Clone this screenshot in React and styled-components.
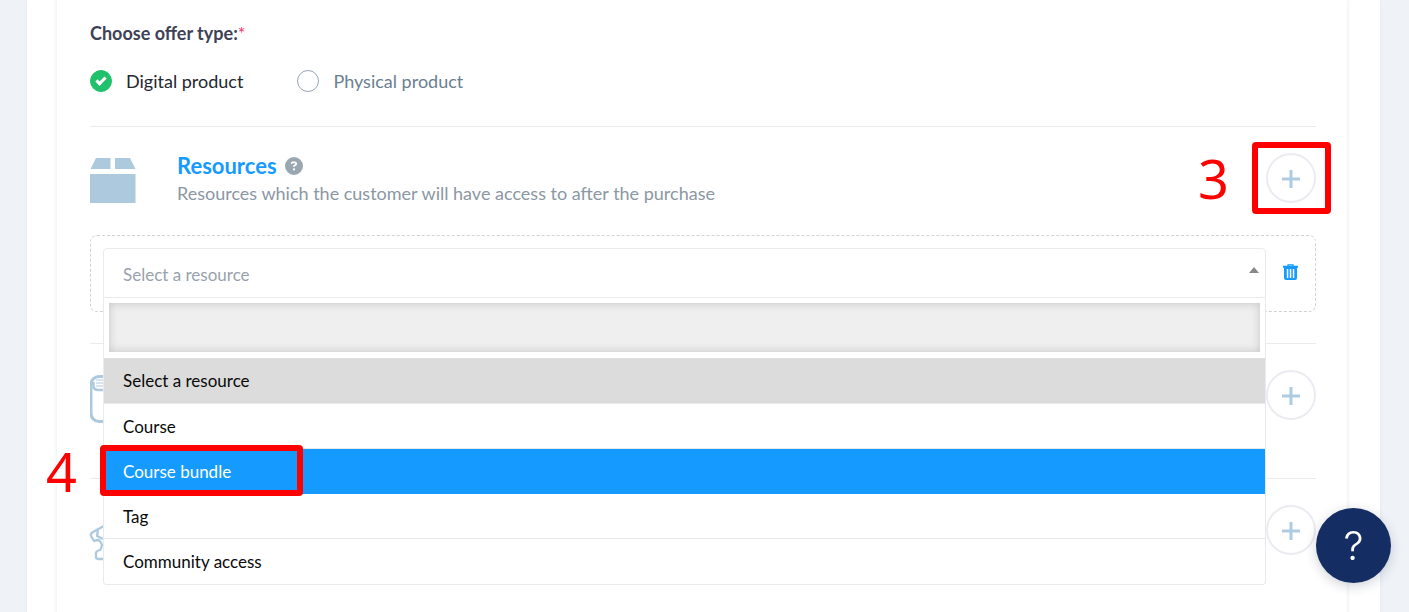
import React from "react";
import styled, { createGlobalStyle } from "styled-components";
import { FaCircleQuestion } from "react-icons/fa6";

const Global = createGlobalStyle`
  *, *::before, *::after { box-sizing: border-box; }
  body { margin: 0; background: #eff3f8; color: #0a0a0a; font-family: Lato, "Liberation Sans", sans-serif; }
  button, input, select { font: inherit; }
`;

const Page = styled.div`
  height: 100vh;
  overflow: hidden;
  padding: 0 29px 0 27px;
`;

const Shell = styled.div`
  min-height: 100%;
  padding: 0 33px 0 30px;
  background: #fff;
  box-shadow: 0 0 3px #dfe7f0;
`;

const Panel = styled.main`
  min-height: 100vh;
  padding: 22px 31px 58px 33px;
  background: #fff;
  box-shadow: 0 0 4px 1px #eceff4;
`;

const OfferType = styled.fieldset`
  margin: 0;
  padding: 0 0 33px;
  border: 0;
`;

const Legend = styled.legend`
  padding: 0;
  font-size: 18px;
  line-height: 22px;
  font-weight: 700;
  color: #3d4257;
`;

const Required = styled.span`
  color: #ff3366;
  font-weight: 400;
`;

const Choices = styled.div`
  display: flex;
  gap: 54px;
  padding-top: 25px;
`;

const Choice = styled.label`
  display: flex;
  align-items: center;
  gap: 14px;
  font-size: 18px;
  line-height: 24px;
  color: ${(p) => (p.$active ? "#23272f" : "#6c7f92")};
`;

const Radio = styled.input`
  appearance: none;
  width: 22px;
  height: 22px;
  margin: 0;
  border: 1px solid #98a3b1;
  border-radius: 50%;
  background: #fff;
  display: grid;
  place-items: center;

  &:checked { border-color: #1fc16b; background: #1fc16b; }
  &:checked::before {
    content: "";
    width: 10px;
    height: 6px;
    margin-bottom: 2px;
    border: solid #fff;
    border-width: 0 0 3px 3px;
    transform: rotate(-45deg);
  }
`;

const Section = styled.section`
  border-top: 1px solid #ebebeb;
  padding: ${(p) => (p.$filled ? "24px 0 31px" : "26px 0 58px")};
`;

const SectionHead = styled.header`
  display: flex;
  align-items: center;
  min-height: 50px;
`;

const IconSlot = styled.div`
  display: flex;
  width: 87px;
  margin: 3px 0 -3px;
  color: #adc9de;
`;

const HeadText = styled.div`
  flex: 1;
`;

const Title = styled.h2`
  display: flex;
  align-items: center;
  gap: 8px;
  margin: 0;
  font-size: 22px;
  line-height: 30px;
  font-weight: 700;
  color: #159bff;

  svg { width: 18px; height: 18px; color: #9aa6b0; }
`;

const Hint = styled.p`
  margin: 0;
  font-size: 18px;
  line-height: 24px;
  color: #8b97a3;
`;

const AddWrap = styled.div`
  position: relative;
`;

const AddButton = styled.button`
  display: grid;
  place-items: center;
  width: 50px;
  height: 50px;
  padding: 2px 0 0;
  border: 2px solid #ebecf1;
  border-radius: 50%;
  background: #fff;
  color: #adcbe2;
`;

const Mark = styled.div`
  position: absolute;
  z-index: 4;
  inset: ${(p) => p.$inset};
  width: ${(p) => p.$width || "auto"};
  border: 6px solid #ff0000;
  border-radius: 4px;
  pointer-events: none;
`;

const Step = styled.span`
  position: absolute;
  top: 50%;
  right: calc(100% + 29px);
  transform: translateY(-50%);
  font-family: "Noto Sans", sans-serif;
  font-size: 54px;
  line-height: 58px;
  color: #ff0000;
`;

const ResourceRow = styled.div`
  display: flex;
  align-items: flex-start;
  height: 77px;
  margin-top: 30px;
  padding: 12px 17px 12px 12px;
  border: 1px dashed #cfd2d6;
  border-radius: 7px;
`;

const Picker = styled.div`
  position: relative;
  flex: 1;
`;

const Field = styled.div`
  position: relative;
  display: flex;
  align-items: center;
  height: 50px;
  border: 1px solid #e9eaee;
  border-radius: 4px 4px 0 0;
  background: #fff;
`;

const FieldSelect = styled.select`
  appearance: none;
  width: 100%;
  height: 48px;
  padding: 2px 19px 0;
  border: 0;
  background: transparent;
  font-size: 17px;
  color: #98a2ad;
`;

const Arrow = styled.span`
  position: absolute;
  top: 18px;
  right: 6px;
  border: solid transparent;
  border-width: 0 5px 6px;
  border-bottom-color: #888;
`;

const Menu = styled.div`
  position: absolute;
  z-index: 3;
  top: 50px;
  left: 0;
  right: 0;
  border: 1px solid #e9eaee;
  border-top: 0;
  border-radius: 0 0 4px 4px;
  background: #fff;
`;

const SearchWrap = styled.div`
  padding: 5px 5px 6px;
`;

const Search = styled.input`
  display: block;
  width: 100%;
  height: 49px;
  padding: 0 14px;
  border: 0;
  background: #efefef;
  box-shadow: inset 0 0 10px #c4c4c4;
  outline: 0;
`;

const Options = styled.ul`
  margin: 0;
  padding: 0;
  list-style: none;
`;

const tones = {
  plain: "background: #fff; color: #0a0a0a;",
  selected: "background: #dcdcdc; color: #0a0a0a;",
  hovered: "background: #159bff; color: #fff; border-color: #159bff;",
};

const Option = styled.li`
  position: relative;
  height: 45px;
  padding: 0 19px;
  border-bottom: 1px solid #e9eaee;
  font-size: 17px;
  line-height: 45px;
  ${(p) => tones[p.$tone]}

  &:first-child { height: 46px; }
  &:last-child { border-bottom: 0; border-radius: 0 0 4px 4px; }
`;

const DeleteButton = styled.button`
  display: flex;
  margin: 16px 0 0 17px;
  padding: 0;
  border: 0;
  background: none;
  color: #159bff;
`;

const HelpButton = styled.button`
  position: fixed;
  z-index: 5;
  right: 18px;
  bottom: 29px;
  width: 75px;
  height: 75px;
  padding: 0;
  border: 0;
  border-radius: 50%;
  background: #142d63;
  box-shadow: 0 3px 12px rgba(20, 30, 60, 0.2);
  color: #fff;
  font-family: Inter, sans-serif;
  font-size: 40px;
  font-weight: 300;
  line-height: 75px;
`;

const BoxIcon = () => (
  <svg width="46" height="46" viewBox="0 0 46 46" fill="currentColor" aria-hidden="true">
    <path d="M6 0h14.500v11H0.500zM25 0h15l5.500 11H25zM0 16h45.500v29H0z" />
  </svg>
);

const WindowIcon = () => (
  <svg width="46" height="50" viewBox="0 0 46 50" fill="none" stroke="currentColor" aria-hidden="true">
    <rect x="1" y="3.500" width="44" height="45" rx="8" strokeWidth="3" />
    <path d="M3.500 9v4q0 4 5 4h34" strokeWidth="2.500" />
    <path d="M6 7h34M6 10h34M6 13h34" />
  </svg>
);

const PuzzleIcon = () => (
  <svg width="46" height="50" viewBox="0 0 46 50" fill="none" stroke="currentColor" strokeWidth="2.300" strokeLinejoin="round" overflow="visible" aria-hidden="true">
    <path d="M23 13 3 24q-3 2-2 4l3 5q3-1 5-1 2 2 3 5-1 4-2 5-4 1-4 3v4q0 2 3 2h28q3 0 3-2v-4q0-2-4-3-1-1-2-5 1-3 3-5 2 0 5 1l3-5q0-2-2-4z" />
    <path d="M8 22 7 28l6 3" />
  </svg>
);

const PlusIcon = () => (
  <svg width="18" height="18" viewBox="0 0 18 18" stroke="currentColor" strokeWidth="3" aria-hidden="true">
    <path d="M9 0v18M0 9h18" />
  </svg>
);

const TrashIcon = () => (
  <svg width="15" height="16" viewBox="0 0 15 16" aria-hidden="true">
    <path d="M5 2V.8h5V2" fill="none" stroke="currentColor" strokeWidth="1.300" />
    <path fill="currentColor" fillRule="evenodd" d="M0 1.800h15v2h-1V14q0 2-2 2H3q-2 0-2-2V3.800H0zM3.800 5v9h1.500V5zM6.800 5v9h1.500V5zM9.800 5v9h1.500V5z" />
  </svg>
);

const resources = [
  { label: "Select a resource", tone: "selected" },
  { label: "Course", tone: "plain" },
  { label: "Course bundle", tone: "hovered", step: "4" },
  { label: "Tag", tone: "plain" },
  { label: "Community access", tone: "plain" },
];

function Add({ label, step }) {
  return (
    <AddWrap>
      <AddButton type="button" aria-label={label}>
        <PlusIcon />
      </AddButton>
      {step && (
        <Mark $inset="-11px -15px -11px -14px">
          <Step>{step}</Step>
        </Mark>
      )}
    </AddWrap>
  );
}

function ResourcePicker() {
  return (
    <Picker>
      <Field>
        <FieldSelect aria-label="Resource" defaultValue="Select a resource">
          {resources.map((r) => (
            <option key={r.label}>{r.label}</option>
          ))}
        </FieldSelect>
        <Arrow />
      </Field>
      <Menu>
        <SearchWrap>
          <Search type="text" aria-label="Search resources" />
        </SearchWrap>
        <Options role="listbox" aria-label="Resources">
          {resources.map((r) => (
            <Option key={r.label} role="option" aria-selected={r.tone === "selected"} $tone={r.tone}>
              {r.label}
              {r.step && (
                <Mark $inset="-4px auto -3px -4px" $width="203px">
                  <Step>{r.step}</Step>
                </Mark>
              )}
            </Option>
          ))}
        </Options>
      </Menu>
    </Picker>
  );
}

export default function App() {
  return (
    <Page>
      <Global />
      <Shell>
        <Panel>
          <OfferType>
            <Legend>
              Choose offer type:<Required>*</Required>
            </Legend>
            <Choices>
              <Choice $active>
                <Radio type="radio" name="offer" defaultChecked />
                Digital product
              </Choice>
              <Choice>
                <Radio type="radio" name="offer" />
                Physical product
              </Choice>
            </Choices>
          </OfferType>

          <Section $filled>
            <SectionHead>
              <IconSlot><BoxIcon /></IconSlot>
              <HeadText>
                <Title>
                  Resources <FaCircleQuestion />
                </Title>
                <Hint>Resources which the customer will have access to after the purchase</Hint>
              </HeadText>
              <Add label="Add resource" step="3" />
            </SectionHead>
            <ResourceRow>
              <ResourcePicker />
              <DeleteButton type="button" aria-label="Delete resource">
                <TrashIcon />
              </DeleteButton>
            </ResourceRow>
          </Section>

          <Section>
            <SectionHead>
              <IconSlot><WindowIcon /></IconSlot>
              <HeadText />
              <Add label="Add page" />
            </SectionHead>
          </Section>

          <Section>
            <SectionHead>
              <IconSlot><PuzzleIcon /></IconSlot>
              <HeadText />
              <Add label="Add extra" />
            </SectionHead>
          </Section>
        </Panel>
      </Shell>
      <HelpButton type="button" aria-label="Help">?</HelpButton>
    </Page>
  );
}
